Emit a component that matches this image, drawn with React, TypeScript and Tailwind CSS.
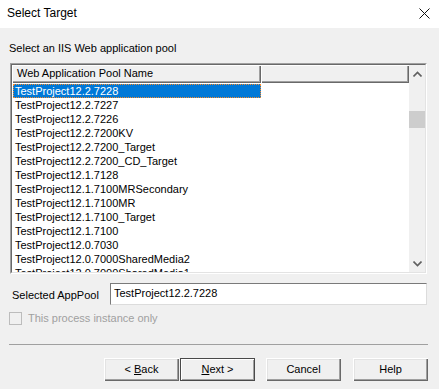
/**
 * Select Target dialog - classic Win32 wizard page for picking an IIS app pool.
 */

const pools = [
  "TestProject12.2.7228",
  "TestProject12.2.7227",
  "TestProject12.2.7226",
  "TestProject12.2.7200KV",
  "TestProject12.2.7200_Target",
  "TestProject12.2.7200_CD_Target",
  "TestProject12.1.7128",
  "TestProject12.1.7100MRSecondary",
  "TestProject12.1.7100MR",
  "TestProject12.1.7100_Target",
  "TestProject12.1.7100",
  "TestProject12.0.7030",
  "TestProject12.0.7000SharedMedia2",
  "TestProject12.0.7000SharedMedia1",
];

function Chevron({ down }: { down?: boolean }) {
  return (
    <svg width="9" height="6" viewBox="0 0 9 6" className={down ? "rotate-180" : ""}>
      <path d="M0.5 5.5 L4.5 1.5 L8.5 5.5" fill="none" stroke="#606060" strokeWidth="1.6" />
    </svg>
  );
}

function WinButton({ children, isDefault }: { children: React.ReactNode; isDefault?: boolean }) {
  return (
    <div
      className={`w-[75px] h-[23px] flex items-center justify-center bg-[#f0f0f0] ${
        isDefault
          ? "shadow-[inset_0_0_0_1px_#4a4a4a,inset_1px_1px_0_1px_#ffffff,inset_-1px_-1px_0_1px_#a0a0a0]"
          : "shadow-[inset_1px_1px_#ffffff,inset_-1px_-1px_#696969,inset_-2px_-2px_#a0a0a0,inset_2px_2px_#e3e3e3]"
      }`}
    >
      {children}
    </div>
  );
}

export default function App() {
  return (
    <div className="w-[439px] h-[389px] bg-[#f0f0f0] text-[11px] leading-[13px] text-black font-['Liberation_Sans',Arial,sans-serif] overflow-hidden">
      {/* Title bar */}
      <div className="h-[28px] bg-white flex items-center justify-between pl-[7px] pr-[9px]">
        <span className="text-[12px] leading-[14px] -mt-[2px]">Select Target</span>
        <svg width="11" height="11" viewBox="0 0 11 11" className="-mt-[2px]">
          <path d="M0.5 0.5 L10.5 10.5 M10.5 0.5 L0.5 10.5" stroke="#111" strokeWidth="1" />
        </svg>
      </div>

      <div className="pl-[10px] pr-[12px]">
        <div className="mt-[14px] -ml-[1px]">Select an IIS Web application pool</div>

        {/* List view */}
        <div className="mt-[8px] h-[211px] border border-t-[#a0a0a0] border-l-[#a0a0a0] border-r-white border-b-white">
          <div className="h-full border border-t-[#696969] border-l-[#696969] border-r-[#e3e3e3] border-b-[#e3e3e3] bg-white flex">
            <div className="flex-1 overflow-hidden">
              <div className="flex h-[18px]">
                <div className="w-[249px] pl-[5px] pt-[2px] bg-[#f0f0f0] shadow-[inset_1px_1px_#ffffff,inset_-1px_-1px_#696969,inset_-2px_-2px_#a0a0a0]">
                  Web Application Pool Name
                </div>
                <div className="flex-1 bg-[#f0f0f0] shadow-[inset_1px_1px_#ffffff,inset_-1px_-1px_#696969,inset_-2px_-2px_#a0a0a0]" />
              </div>
              <div className="mt-[1px] ml-[1px]">
                {pools.map((name, idx) =>
                  idx === 0 ? (
                    <div
                      key={name}
                      className="w-[248px] h-[14px] leading-[12px] pl-[1px] bg-[#0078d7] text-white border border-dotted border-[#f58a2a]"
                    >
                      {name}
                    </div>
                  ) : (
                    <div key={name} className="h-[14px] leading-[14px] pl-[2px] whitespace-nowrap">
                      {name}
                    </div>
                  )
                )}
              </div>
            </div>

            {/* Vertical scrollbar */}
            <div className="w-[16px] bg-[#f0f0f0] flex flex-col">
              <div className="h-[17px] flex items-center justify-center">
                <Chevron />
              </div>
              <div className="mt-[29px] h-[17px] bg-[#cdcdcd]" />
              <div className="mt-auto h-[17px] flex items-center justify-center">
                <Chevron down />
              </div>
            </div>
          </div>
        </div>

        {/* Selected pool */}
        <div className="mt-[9px] flex items-start">
          <div className="w-[98px] ml-[2px] pt-[6px]">Selected AppPool</div>
          <div className="flex-1 h-[22px] bg-white border border-t-[#7a7a7a] border-l-[#7a7a7a] border-r-[#dcdcdc] border-b-[#dcdcdc] pl-[3px] pt-[3px]">
            TestProject12.2.7228
          </div>
        </div>

        <div className="mt-[7px] flex items-center -ml-[1px]">
          <div className="w-[13px] h-[13px] border border-[#bcbcbc] bg-[#f0f0f0]" />
          <span className="ml-[6px] text-[#a0a0a0]">This process instance only</span>
        </div>

        <div className="mt-[19px] -ml-[1px] -mr-[1px] h-[1px] bg-[#a0a0a0]" />

        {/* Wizard buttons */}
        <div className="mt-[13px] flex justify-end -mr-[1px]">
          <WinButton>
            &lt;&nbsp;<span className="underline">B</span>ack
          </WinButton>
          <div className="ml-[1px]">
            <WinButton isDefault>
              <span className="underline">N</span>ext &gt;
            </WinButton>
          </div>
          <div className="ml-[11px]">
            <WinButton>Cancel</WinButton>
          </div>
          <div className="ml-[12px]">
            <WinButton>Help</WinButton>
          </div>
        </div>
      </div>
    </div>
  );
}
